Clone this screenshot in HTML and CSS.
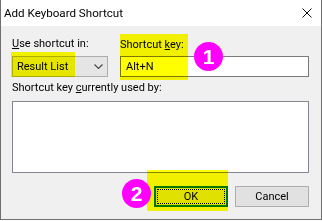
FILE: index.html
```html
<!DOCTYPE html>
<html lang="en">
<head>
<meta charset="utf-8">
<title>Add Keyboard Shortcut</title>
<link rel="stylesheet" href="styles.css">
</head>
<body>
<div class="window">
  <div class="titlebar">
    <span class="title">Add Keyboard Shortcut</span>
    <svg class="close" width="10" height="10" viewBox="0 0 10 10"><path d="M0.5 0.5 L9.5 9.5 M9.5 0.5 L0.5 9.5" stroke="#111" stroke-width="1" fill="none"/></svg>
  </div>
  <div class="content">
    <div class="grid">
      <div class="lbl"><u>U</u>se shortcut in:</div>
      <div class="lbl lbl-key">Shortcut <u>k</u>ey:</div>
      <div class="combo"><span>Result List</span><svg class="chev" width="9" height="5" viewBox="0 0 9 5"><path d="M0.5 0.5 L4.5 4.5 L8.5 0.5" stroke="#444" stroke-width="1.1" fill="none"/></svg></div>
      <div class="field">Alt+N</div>
    </div>
    <div class="lbl lbl-used">Shortcut key <u>c</u>urrently used by:</div>
    <div class="listbox"></div>
    <div class="buttons">
      <div class="btn btn-default"><span class="focus">OK</span></div>
      <div class="btn">Cancel</div>
    </div>
  </div>
  <div class="hl hl-combo"></div>
  <div class="hl hl-key"></div>
  <div class="hl hl-ok"></div>
  <div class="badge badge-1">1</div>
  <div class="badge badge-2">2</div>
</div>
</body>
</html>
```

FILE: styles.css
```css
html, body {
  margin: 0;
  padding: 0;
  background: #ffffff;
}
body {
  font-family: Roboto, "Open Sans", sans-serif;
  font-size: 11px;
  color: #000;
}
.window {
  position: relative;
  isolation: isolate;
  width: 322px;
  height: 220px;
  box-sizing: border-box;
  border-left: 1px solid #6f6f6f;
  border-right: 1px solid #6f6f6f;
  border-bottom: 1px solid #6f6f6f;
  background: #f0f0f0;
  overflow: hidden;
}
.titlebar {
  height: 26px;
  background: #ffffff;
  display: flex;
  align-items: center;
  padding-left: 3px;
}
.title {
  font-size: 11.6px;
  line-height: 16px;
}
.close {
  margin-left: auto;
  margin-right: 9px;
  display: block;
}
.content {
  padding: 10px 12px 0 11px;
}
.grid {
  display: grid;
  grid-template-columns: 96px 189px;
  column-gap: 12px;
  row-gap: 4px;
}
.lbl {
  line-height: 16px;
  white-space: nowrap;
}
.lbl u {
  text-underline-offset: 1px;
}
.lbl-key {
  position: relative;
  top: 1px;
}
.combo {
  height: 21px;
  box-sizing: border-box;
  border: 1px solid #adadad;
  background: #e5e5e5;
  display: flex;
  align-items: center;
  padding-left: 4px;
  padding-right: 4px;
}
.combo span {
  flex: 1;
}
.chev {
  display: block;
}
.field {
  height: 21px;
  box-sizing: border-box;
  border: 1px solid #7a7a7a;
  background: #ffffff;
  display: flex;
  align-items: center;
  padding-left: 5px;
}
.lbl-used {
  margin-top: 3px;
}
.listbox {
  margin-top: 5px;
  height: 72px;
  box-sizing: border-box;
  border: 1px solid #828790;
  background: #ffffff;
}
.buttons {
  margin-top: 13px;
  display: flex;
  justify-content: flex-end;
  gap: 7px;
}
.btn {
  width: 74px;
  height: 21px;
  box-sizing: border-box;
  border: 1px solid #adadad;
  background: #e1e1e1;
  display: flex;
  align-items: center;
  justify-content: center;
}
.btn-default {
  border: 2px solid #0078d7;
  padding: 1px;
}
.focus {
  flex: 1;
  align-self: stretch;
  display: flex;
  align-items: center;
  justify-content: center;
  border: 1px dotted #000;
}
.hl {
  position: absolute;
  background: #ffff00;
  mix-blend-mode: multiply;
}
.hl-combo {
  left: 10px;
  top: 52px;
  width: 64px;
  height: 25px;
}
.hl-key {
  left: 119px;
  top: 34px;
  width: 68px;
  height: 46px;
}
.hl-ok {
  left: 146px;
  top: 170px;
  width: 81px;
  height: 41px;
}
.badge {
  position: absolute;
  width: 29px;
  height: 29px;
  border-radius: 50%;
  background: #ff00ff;
  color: #ffffff;
  font-family: "Liberation Sans", Arial, sans-serif;
  font-weight: bold;
  font-size: 21px;
  line-height: 29px;
  text-align: center;
}
.badge-1 {
  left: 193px;
  top: 42px;
}
.badge-2 {
  left: 121px;
  top: 179px;
}
```
